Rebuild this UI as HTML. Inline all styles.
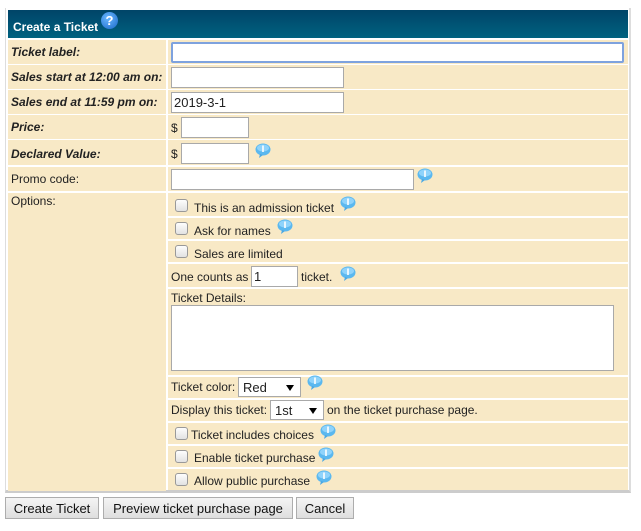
<!DOCTYPE html>
<html><head><style>
*{box-sizing:border-box;margin:0;padding:0}
body{width:641px;height:531px;background:#fff;font-family:"Liberation Sans",Arial,sans-serif;font-size:12px;color:#222;position:relative;overflow:hidden}
.a{position:absolute}
.c{position:absolute;background:#f8e9c6}
.l{font-weight:bold;font-style:italic;padding:5px 0 0 3px;font-size:12px}
.n{padding:5px 0 0 3px}
.in{position:absolute;background:#fff;border:1px solid #a9a9a9;height:22px}
.cb{position:absolute;width:13px;height:13px;border:1px solid #999;border-radius:3px;background:linear-gradient(#fdfdfd,#e2e2e2)}
.t{position:absolute;font-size:12px}
.sel{position:absolute;background:#fff;border:1px solid #a9a9a9;height:20px;font-size:13px;padding:2px 0 0 4px}
.sel:after{content:"";position:absolute;right:6px;top:7px;border-left:4px solid transparent;border-right:4px solid transparent;border-top:6px solid #000}
.btn{position:absolute;top:497px;height:22px;border:1px solid #adadad;background:linear-gradient(#f4f4f4,#dedede);font-size:13px;padding:3px 0 0 0;text-align:center;color:#111}
</style></head><body>
<svg width="0" height="0" style="position:absolute"><defs><g id="b"><ellipse cx="8" cy="6.5" rx="7.5" ry="6" fill="#5bb8ef"/><ellipse cx="8" cy="5" rx="6" ry="3.5" fill="#8fd3fb"/><path d="M5 11 L4 15 L8 12 Z" fill="#4aa8e4"/><rect x="7.2" y="2.5" width="1.6" height="6.5" fill="#fff"/></g></defs></svg>
<div class="a" style="left:5px;top:8px;width:626px;height:485px;border-left:1px solid #ddd;border-right:2px solid #ddd;border-bottom:3px solid #ccc"></div>
<div class="a" style="left:8px;top:10px;width:620px;height:28px;background:linear-gradient(#004468,#006280);color:#fff;font-weight:bold;font-size:12px;padding:10px 0 0 5px">Create a Ticket</div>
<div class="a" style="left:101px;top:12px;width:17px;height:17px;border-radius:50%;background:radial-gradient(circle at 40% 35%,#6ab8ff,#1a68c8);color:#fff;font-weight:bold;font-size:13px;text-align:center;line-height:17px">?</div>

<div class="c l" style="left:8px;top:40px;width:158px;height:24px">Ticket label:</div>
<div class="c" style="left:168px;top:40px;width:460px;height:24px"></div>
<div class="in" style="left:171px;top:42px;width:453px;height:21px;border:2px solid #7ea2de;border-radius:2px"></div>

<div class="c l" style="left:8px;top:65px;width:158px;height:24px">Sales start at 12:00 am on:</div>
<div class="c" style="left:168px;top:65px;width:460px;height:24px"></div>
<div class="in" style="left:171px;top:67px;width:173px;height:21px"></div>

<div class="c l" style="left:8px;top:90px;width:158px;height:24px">Sales end at 11:59 pm on:</div>
<div class="c" style="left:168px;top:90px;width:460px;height:24px"></div>
<div class="in" style="left:171px;top:92px;width:173px;height:21px;font-size:13px;padding:2px 0 0 2px">2019-3-1</div>

<div class="c l" style="left:8px;top:115px;width:158px;height:24px">Price:</div>
<div class="c" style="left:168px;top:115px;width:460px;height:24px"></div>
<div class="t" style="left:171px;top:121px">$</div>
<div class="in" style="left:181px;top:117px;width:68px;height:21px"></div>

<div class="c l" style="left:8px;top:140px;width:158px;height:25px;padding-top:7px">Declared Value:</div>
<div class="c" style="left:168px;top:140px;width:460px;height:25px"></div>
<div class="t" style="left:171px;top:147px">$</div>
<div class="in" style="left:181px;top:143px;width:68px;height:21px"></div>
<svg class="a" style="left:255px;top:143px" width="16" height="16"><use href="#b"/></svg>

<div class="c n" style="left:8px;top:167px;width:158px;height:24px">Promo code:</div>
<div class="c" style="left:168px;top:167px;width:460px;height:24px"></div>
<div class="in" style="left:171px;top:169px;width:243px;height:21px"></div>
<svg class="a" style="left:417px;top:168px" width="16" height="16"><use href="#b"/></svg>

<div class="c n" style="left:8px;top:193px;width:158px;height:298px;padding-top:1px">Options:</div>
<div class="c" style="left:168px;top:193px;width:460px;height:23px"></div>
<div class="cb" style="left:175px;top:199px"></div><div class="t" style="left:194px;top:201px">This is an admission ticket</div>
<svg class="a" style="left:340px;top:196px" width="16" height="16"><use href="#b"/></svg>
<div class="c" style="left:168px;top:218px;width:460px;height:21px"></div>
<div class="cb" style="left:175px;top:222px"></div><div class="t" style="left:194px;top:224px">Ask for names</div>
<svg class="a" style="left:277px;top:219px" width="16" height="16"><use href="#b"/></svg>
<div class="c" style="left:168px;top:241px;width:460px;height:21px"></div>
<div class="cb" style="left:175px;top:245px"></div><div class="t" style="left:194px;top:247px">Sales are limited</div>
<div class="c" style="left:168px;top:264px;width:460px;height:23px"></div>
<div class="t" style="left:171px;top:270px">One counts as</div>
<div class="in" style="left:251px;top:266px;width:47px;height:21px;font-size:13px;padding:2px 0 0 2px">1</div>
<div class="t" style="left:301px;top:270px">ticket.</div>
<svg class="a" style="left:340px;top:266px" width="16" height="16"><use href="#b"/></svg>
<div class="c" style="left:168px;top:289px;width:460px;height:86px"></div>
<div class="t" style="left:171px;top:291px">Ticket Details:</div>
<div class="in" style="left:171px;top:305px;width:443px;height:66px"></div>
<div class="c" style="left:168px;top:377px;width:460px;height:21px"></div>
<div class="t" style="left:171px;top:380px">Ticket color:</div>
<div class="sel" style="left:238px;top:377px;width:63px">Red</div>
<svg class="a" style="left:307px;top:375px" width="16" height="16"><use href="#b"/></svg>
<div class="c" style="left:168px;top:400px;width:460px;height:21px"></div>
<div class="t" style="left:171px;top:403px">Display this ticket:</div>
<div class="sel" style="left:270px;top:400px;width:54px">1st</div>
<div class="t" style="left:327px;top:403px">on the ticket purchase page.</div>
<div class="c" style="left:168px;top:423px;width:460px;height:21px"></div>
<div class="cb" style="left:175px;top:427px"></div><div class="t" style="left:191px;top:428px">Ticket includes choices</div>
<svg class="a" style="left:320px;top:424px" width="16" height="16"><use href="#b"/></svg>
<div class="c" style="left:168px;top:446px;width:460px;height:21px"></div>
<div class="cb" style="left:175px;top:450px"></div><div class="t" style="left:194px;top:451px">Enable ticket purchase</div>
<svg class="a" style="left:318px;top:447px" width="16" height="16"><use href="#b"/></svg>
<div class="c" style="left:168px;top:469px;width:460px;height:21px"></div>
<div class="cb" style="left:175px;top:473px"></div><div class="t" style="left:194px;top:474px">Allow public purchase</div>
<svg class="a" style="left:316px;top:470px" width="16" height="16"><use href="#b"/></svg>

<div class="btn" style="left:5px;width:94px">Create Ticket</div>
<div class="btn" style="left:103px;width:190px">Preview ticket purchase page</div>
<div class="btn" style="left:296px;width:58px">Cancel</div>
</body></html>
